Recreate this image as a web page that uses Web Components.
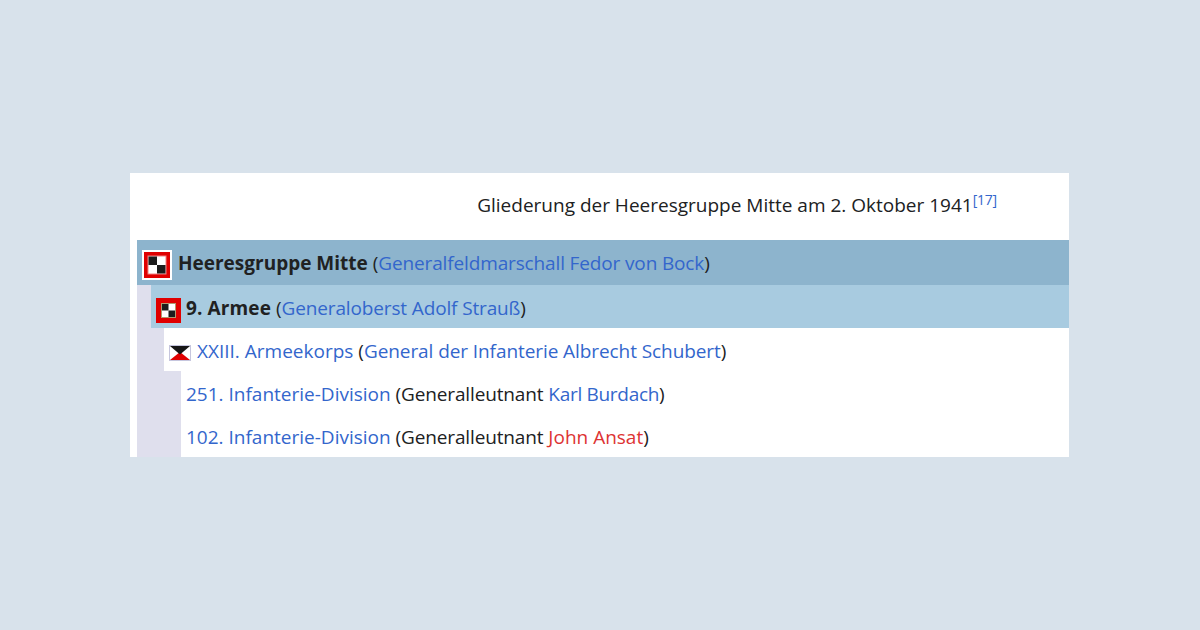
<!DOCTYPE html>
<html>
<head>
<meta charset="utf-8">
<style>
  html, body { margin: 0; height: 100%; }
  body {
    background: #d8e2eb;
    font-family: "Open Sans", sans-serif;
    color: #202122;
    padding: 173px 0 0 130px;
    box-sizing: border-box;
    overflow: hidden;
  }
</style>
</head>
<body>
<oob-chart>
  <oob-row level="0">
    <oob-flag slot="flag" kind="army-group"></oob-flag>
    <b>Heeresgruppe Mitte</b> (<a class="tight">Generalfeldmarschall Fedor von Bock</a>)
  </oob-row>
  <oob-row level="1">
    <oob-flag slot="flag" kind="army"></oob-flag>
    <b class="wide">9. Armee</b> (<a class="tight">Generaloberst Adolf Strauß</a>)
  </oob-row>
  <oob-row level="2">
    <oob-flag slot="flag" kind="corps"></oob-flag>
    <a>XXIII. Armeekorps</a> (<a class="snug">General der Infanterie Albrecht Schubert</a>)
  </oob-row>
  <oob-row level="3"><a>251. Infanterie-Division</a> <span class="tight">(Generalleutnant</span> <a class="tighter">Karl Burdach</a>)</oob-row>
  <oob-row level="3"><a>102. Infanterie-Division</a> <span class="tight">(Generalleutnant</span> <a class="new">John Ansat</a>)</oob-row>
</oob-chart>
<script>
class OobChart extends HTMLElement {
  constructor() {
    super();
    this.attachShadow({ mode: "open" });
    this.shadowRoot.innerHTML = `
      <style>
        :host { display: block; width: 939px; height: 284px; background: #fff; overflow: hidden; font-size: 19px; }
        .caption { height: 67px; box-sizing: border-box; padding: 19px 71px 0 0; text-align: right; line-height: 26px; }
        sup { font-size: 14px; line-height: 0; color: #3366cc; margin-right: 1px; letter-spacing: -0.2px; }
        .rows { padding-left: 7px; display: flex; flex-direction: column; }
      </style>
      <div class="caption">Gliederung der Heeresgruppe Mitte am 2. Oktober 1941<sup>[17]</sup></div>
      <div class="rows"><slot></slot></div>
    `;
  }
}
customElements.define("oob-chart", OobChart);

class OobRow extends HTMLElement {
  static levels = [
    { height: 45, bg: "#8db4cd", rail: 0, gap: 6, drop: 5, top: 0 },
    { height: 43, bg: "#a8cbe0", rail: 14, gap: 5, drop: 6, top: 2 },
    { height: 43, bg: "#fff", rail: 27, gap: 6, drop: 5, top: 2 },
    { height: 43, bg: "#fff", rail: 44, gap: 0, drop: 0, top: 2 }
  ];
  constructor() {
    super();
    this.attachShadow({ mode: "open" });
  }
  connectedCallback() {
    const l = OobRow.levels[this.getAttribute("level") || 0];
    this.shadowRoot.innerHTML = `
      <style>
        :host { display: flex; height: ${l.height}px; }
        .rail { width: ${l.rail}px; background: #dfdfed; flex: none; }
        .body { flex: 1; display: flex; align-items: center; gap: ${l.gap}px; padding: ${l.top}px 0 0 5px; background: ${l.bg}; }
        ::slotted(oob-flag) { margin-top: ${l.drop}px; }
        ::slotted(a) { color: #3366cc; }
        ::slotted(a.new) { color: #dd3333; }
        ::slotted(.tight) { letter-spacing: -0.14px; }
        ::slotted(.tighter) { letter-spacing: -0.3px; }
        ::slotted(.snug) { letter-spacing: -0.08px; }
        ::slotted(.wide) { letter-spacing: 0.12px; }
      </style>
      <div class="rail"></div>
      <div class="body"><slot name="flag"></slot><span><slot></slot></span></div>
    `;
  }
}
customElements.define("oob-row", OobRow);

class OobFlag extends HTMLElement {
  static art = {
    "army-group": `<svg width="30" height="30" viewBox="0 0 30 30">
        <rect width="30" height="30" fill="#fff"/>
        <rect x="2" y="2" width="26" height="26" fill="#e00000"/>
        <rect x="5.5" y="5.5" width="19" height="19" fill="#f08080"/>
        <rect x="6.5" y="6.5" width="17" height="17" fill="#fff"/>
        <rect x="6.5" y="6.5" width="8.5" height="8.5" fill="#1c1c1c"/>
        <rect x="15" y="15" width="8.5" height="8.5" fill="#1c1c1c"/>
      </svg>`,
    "army": `<svg width="25" height="25" viewBox="0 0 25 25">
        <rect width="25" height="25" fill="#e00000"/>
        <rect x="5" y="5" width="15" height="15" fill="#fff"/>
        <rect x="5.5" y="5.5" width="14" height="14" fill="none" stroke="#b09a70" stroke-width="1"/>
        <rect x="6" y="6" width="6.5" height="6.5" fill="#1c1c1c"/>
        <rect x="12.5" y="12.5" width="6.5" height="6.5" fill="#1c1c1c"/>
      </svg>`,
    "corps": `<svg width="22" height="16" viewBox="0 0 22 16">
        <rect x="0.5" y="0.5" width="21" height="15" fill="#fff" stroke="#c6c6de"/>
        <path d="M1 15H21L11 7Z" fill="#e00000"/>
        <path d="M1 1H21L11 9.5Z" fill="#161616"/>
      </svg>`
  };
  constructor() {
    super();
    this.attachShadow({ mode: "open" });
  }
  connectedCallback() {
    this.shadowRoot.innerHTML = `
      <style>
        :host { display: block; flex: none; line-height: 0; }
      </style>
      ${OobFlag.art[this.getAttribute("kind")]}
    `;
  }
}
customElements.define("oob-flag", OobFlag);
</script>
</body>
</html>
